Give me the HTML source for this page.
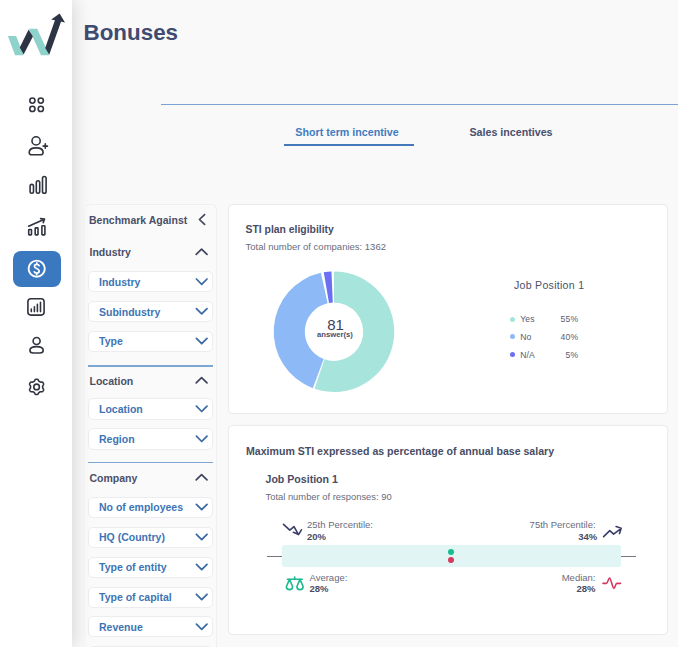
<!DOCTYPE html>
<html><head><meta charset="utf-8">
<style>
*{box-sizing:border-box;margin:0;padding:0}
html,body{width:678px;height:647px;overflow:hidden}
body{background:#f9f9fa;font-family:"Liberation Sans",sans-serif;position:relative}
.abs{position:absolute}
#side{position:absolute;left:0;top:0;width:72px;height:647px;background:#fff;box-shadow:4px 0 15px rgba(0,0,0,0.12);z-index:5}
.t{position:absolute;white-space:nowrap;line-height:1}
#panel{left:84px;top:204px;width:133px;height:460px;background:#fafafb;border:1px solid #efeff1;border-left-color:rgba(0,0,0,0.015);border-radius:6px}
.dd{position:absolute;left:87.6px;width:125.2px;height:21.2px;background:#fff;border:1px solid #ededf0;border-radius:5px}
.div{position:absolute;left:88px;width:125px;height:1.6px;background:#7ea6d2}
.card{position:absolute;left:227.6px;width:440.6px;background:#fff;border:1px solid #ebebee;border-radius:5px;box-shadow:0 0 2px rgba(0,0,0,0.03)}
</style></head><body>
<div id="side">
<svg width="72" height="647" viewBox="0 0 72 647" style="position:absolute;left:0;top:0">
 <g fill="#8ed3cb">
  <polygon points="7.9,36.1 16.2,36.1 23.4,55.2 15.1,55.2"/>
  <polygon points="29,28.7 37.2,28.7 49.2,55.2 41,55.2"/>
 </g>
 <g fill="#2d3545">
  <polygon points="19.8,47.6 28.6,29.6 32.9,36.6 23.6,54.6"/>
  <polygon points="45.2,48 55.2,19.6 61.2,21.2 49.2,54.8"/>
  <polygon points="51.2,19.6 59.6,13.6 65,22.6"/>
 </g>
 <g fill="none" stroke="#30343f" stroke-width="1.6" stroke-linecap="round" stroke-linejoin="round">
  <circle cx="32.4" cy="100.6" r="2.6"/><circle cx="40.8" cy="100.6" r="2.6"/>
  <circle cx="32.4" cy="108.9" r="2.6"/><circle cx="40.8" cy="108.9" r="2.6"/>
  <circle cx="36.1" cy="140.9" r="4.1"/>
  <path d="M29.2 152.5 C29.2 149.6 32 147.9 36.1 147.9 C40.2 147.9 43.1 149.6 43.1 152.5 C43.1 154.2 42.3 154.8 40.5 154.8 L31.8 154.8 C30 154.8 29.2 154.2 29.2 152.5 Z"/>
  <path d="M45.3 143.9 V148.3 M43.1 146.1 H47.5" stroke-width="1.6"/>
  <rect x="30.1" y="184.4" width="3.4" height="8.8" rx="1.7"/>
  <rect x="36.3" y="180.7" width="3.4" height="12.5" rx="1.7"/>
  <rect x="42.5" y="176.5" width="3.6" height="16.7" rx="1.8"/>
  <rect x="28.7" y="229.5" width="2.8" height="5.4" rx="0.6"/>
  <rect x="35.2" y="227.9" width="2.8" height="7" rx="0.6"/>
  <rect x="41.9" y="225.8" width="3" height="9.1" rx="0.6"/>
  <path d="M28.6 226.2 L44.4 219.2 M40.6 218.6 L44.6 219 L43.2 222.6"/>
  <rect x="27.9" y="298.8" width="16.2" height="16.3" rx="3"/>
  <path d="M31.3 311.6 V309 M34.4 311.6 V306.7 M37.4 311.6 V304.4 M40.5 311.6 V302.3" stroke-width="1.6"/>
  <circle cx="36.6" cy="341" r="3.5"/>
  <path d="M29.9 350.3 C29.9 347.9 33 346.6 36.6 346.6 C40.2 346.6 43.2 347.9 43.2 350.3 C43.2 352.4 41.5 353 40 353 L33.2 353 C31.6 353 29.9 352.4 29.9 350.3 Z"/>
  <circle cx="36.6" cy="386.9" r="2.8"/>
  <path d="M36.60 379.25 L36.80 379.26 L37.00 379.27 L37.20 379.30 L37.39 379.34 L37.59 379.41 L37.77 379.50 L37.95 379.63 L38.11 379.81 L38.25 380.03 L38.37 380.28 L38.49 380.54 L38.59 380.76 L38.71 380.95 L38.83 381.10 L38.95 381.22 L39.08 381.32 L39.22 381.42 L39.35 381.50 L39.49 381.58 L39.62 381.66 L39.76 381.74 L39.90 381.82 L40.04 381.89 L40.19 381.96 L40.34 382.02 L40.51 382.07 L40.70 382.10 L40.92 382.10 L41.17 382.09 L41.44 382.06 L41.72 382.04 L41.99 382.05 L42.22 382.10 L42.42 382.19 L42.59 382.30 L42.75 382.43 L42.88 382.58 L43.01 382.74 L43.12 382.90 L43.23 383.07 L43.32 383.25 L43.41 383.43 L43.48 383.62 L43.54 383.81 L43.58 384.01 L43.59 384.22 L43.57 384.43 L43.49 384.66 L43.37 384.89 L43.22 385.13 L43.05 385.35 L42.91 385.56 L42.81 385.75 L42.74 385.93 L42.69 386.10 L42.67 386.26 L42.66 386.42 L42.65 386.58 L42.65 386.74 L42.65 386.90 L42.65 387.06 L42.65 387.22 L42.66 387.38 L42.67 387.54 L42.69 387.70 L42.74 387.87 L42.81 388.05 L42.91 388.24 L43.05 388.45 L43.22 388.67 L43.37 388.91 L43.49 389.14 L43.57 389.37 L43.59 389.58 L43.58 389.79 L43.54 389.99 L43.48 390.18 L43.41 390.37 L43.32 390.55 L43.23 390.72 L43.12 390.90 L43.01 391.06 L42.88 391.22 L42.75 391.37 L42.59 391.50 L42.42 391.61 L42.22 391.70 L41.99 391.75 L41.72 391.76 L41.44 391.74 L41.17 391.71 L40.92 391.70 L40.70 391.70 L40.51 391.73 L40.34 391.78 L40.19 391.84 L40.04 391.91 L39.90 391.98 L39.76 392.06 L39.62 392.14 L39.49 392.22 L39.35 392.30 L39.22 392.38 L39.08 392.48 L38.95 392.58 L38.83 392.70 L38.71 392.85 L38.59 393.04 L38.49 393.26 L38.37 393.52 L38.25 393.77 L38.11 393.99 L37.95 394.17 L37.77 394.30 L37.59 394.39 L37.39 394.46 L37.20 394.50 L37.00 394.53 L36.80 394.54 L36.60 394.55 L36.40 394.54 L36.20 394.53 L36.00 394.50 L35.81 394.46 L35.61 394.39 L35.43 394.30 L35.25 394.17 L35.09 393.99 L34.95 393.77 L34.83 393.52 L34.71 393.26 L34.61 393.04 L34.49 392.85 L34.37 392.70 L34.25 392.58 L34.12 392.48 L33.98 392.38 L33.85 392.30 L33.71 392.22 L33.58 392.14 L33.44 392.06 L33.30 391.98 L33.16 391.91 L33.01 391.84 L32.86 391.78 L32.69 391.73 L32.50 391.70 L32.28 391.70 L32.03 391.71 L31.76 391.74 L31.48 391.76 L31.21 391.75 L30.98 391.70 L30.78 391.61 L30.61 391.50 L30.45 391.37 L30.32 391.22 L30.19 391.06 L30.08 390.90 L29.97 390.72 L29.88 390.55 L29.79 390.37 L29.72 390.18 L29.66 389.99 L29.62 389.79 L29.61 389.58 L29.63 389.37 L29.71 389.14 L29.83 388.91 L29.98 388.67 L30.15 388.45 L30.29 388.24 L30.39 388.05 L30.46 387.87 L30.51 387.70 L30.53 387.54 L30.54 387.38 L30.55 387.22 L30.55 387.06 L30.55 386.90 L30.55 386.74 L30.55 386.58 L30.54 386.42 L30.53 386.26 L30.51 386.10 L30.46 385.93 L30.39 385.75 L30.29 385.56 L30.15 385.35 L29.98 385.13 L29.83 384.89 L29.71 384.66 L29.63 384.43 L29.61 384.22 L29.62 384.01 L29.66 383.81 L29.72 383.62 L29.79 383.43 L29.88 383.25 L29.97 383.07 L30.08 382.90 L30.19 382.74 L30.32 382.58 L30.45 382.43 L30.61 382.30 L30.78 382.19 L30.98 382.10 L31.21 382.05 L31.48 382.04 L31.76 382.06 L32.03 382.09 L32.28 382.10 L32.50 382.10 L32.69 382.07 L32.86 382.02 L33.01 381.96 L33.16 381.89 L33.30 381.82 L33.44 381.74 L33.58 381.66 L33.71 381.58 L33.85 381.50 L33.98 381.42 L34.12 381.32 L34.25 381.22 L34.37 381.10 L34.49 380.95 L34.61 380.76 L34.71 380.54 L34.83 380.28 L34.95 380.03 L35.09 379.81 L35.25 379.63 L35.43 379.50 L35.61 379.41 L35.81 379.34 L36.00 379.30 L36.20 379.27 L36.40 379.26 Z"/>
 </g>
</svg>
<div style="position:absolute;left:13px;top:251px;width:47.5px;height:35.5px;border-radius:8px;background:#3a78bf"></div>
<svg width="72" height="40" viewBox="0 248 72 40" style="position:absolute;left:0;top:248px">
 <circle cx="36.7" cy="268.7" r="8.1" fill="none" stroke="#fff" stroke-width="1.9"/>
 <path d="M39.1 265.6 C38.7 264.8 37.9 264.4 36.8 264.4 C35.4 264.4 34.5 265.2 34.5 266.3 C34.5 268.9 39.2 268.1 39.2 271.1 C39.2 272.3 38.2 273.1 36.7 273.1 C35.5 273.1 34.6 272.6 34.3 271.8 M36.8 262.9 V264.4 M36.7 273.1 V274.5" fill="none" stroke="#fff" stroke-width="1.75" stroke-linecap="round" stroke-linejoin="round"/>
</svg>
</div>
<div class="abs" style="left:160.5px;top:104px;width:518px;height:1px;background:#7aa3d3"></div>
<div class="abs" style="left:284px;top:144.4px;width:130px;height:1.8px;background:#4379bb"></div>
<div class="abs" id="panel"></div>
<div class="dd" style="top:271.2px"></div>
<div class="dd" style="top:300.8px"></div>
<div class="dd" style="top:330.6px"></div>
<div class="div" style="top:365.0px"></div>
<div class="dd" style="top:398.4px"></div>
<div class="dd" style="top:428.4px"></div>
<div class="div" style="top:461.7px"></div>
<div class="dd" style="top:496.6px"></div>
<div class="dd" style="top:526.5px"></div>
<div class="dd" style="top:556.6px"></div>
<div class="dd" style="top:586.5px"></div>
<div class="dd" style="top:616.3px"></div>
<div class="dd" style="top:646.2px"></div>
<div class="card" style="top:204px;height:210px"></div>
<div class="card" style="top:425px;height:210px"></div>
<div class="abs" style="left:266.7px;top:555.7px;width:15.6px;height:1.3px;background:#74777f"></div>
<div class="abs" style="left:620.5px;top:555.7px;width:15.3px;height:1.3px;background:#74777f"></div>
<div class="abs" style="left:282.3px;top:545.3px;width:339px;height:22.1px;border-radius:2.5px;background:#e1f5f4"></div>
<div class="abs" style="left:448.3px;top:548.8px;width:6.2px;height:6.2px;border-radius:50%;background:#18be92"></div>
<div class="abs" style="left:448.3px;top:556.5px;width:6.2px;height:6.2px;border-radius:50%;background:#d8395f"></div>
<div class="abs" style="left:510.4px;top:316.6px;width:5px;height:5px;border-radius:50%;background:#a7e5dc"></div>
<div class="abs" style="left:510.4px;top:334.4px;width:5px;height:5px;border-radius:50%;background:#8eb9f7"></div>
<div class="abs" style="left:510.4px;top:352.2px;width:5px;height:5px;border-radius:50%;background:#6a70f1"></div>

<svg class="abs" style="left:0;top:0" width="678" height="647">
<g>
<path d="M334.00 271.40 A60.3 60.3 0 1 1 314.47 388.75 L324.54 359.33 A29.2 29.2 0 1 0 334.00 302.50 Z" fill="#a7e5dc"/>
<path d="M312.78 388.14 A60.3 60.3 0 0 1 320.85 272.85 L327.63 303.20 A29.2 29.2 0 0 0 323.73 359.03 Z" fill="#8eb9f7"/>
<path d="M323.74 272.28 A60.3 60.3 0 0 1 331.47 271.45 L332.78 302.53 A29.2 29.2 0 0 0 329.03 302.93 Z" fill="#6a70f1"/>
</g>
<g fill="none" stroke-width="1.6" stroke-linecap="round" stroke-linejoin="round">
<path d="M204.6 214.6 L199.4 219.5 L204.6 224.4" stroke="#40465e" stroke-width="1.7"/>
<path d="M196.2 254.4 L201.6 249.2 L207 254.4" stroke="#40465e" stroke-width="1.75"/>
<path d="M196.4 279.0 L201.7 284.3 L207 279.0" stroke="#3b6aa3" stroke-width="1.75"/>
<path d="M196.4 308.6 L201.7 313.9 L207 308.6" stroke="#3b6aa3" stroke-width="1.75"/>
<path d="M196.4 338.4 L201.7 343.7 L207 338.4" stroke="#3b6aa3" stroke-width="1.75"/>
<path d="M196.2 382.8 L201.6 377.6 L207 382.8" stroke="#40465e" stroke-width="1.75"/>
<path d="M196.4 406.2 L201.7 411.5 L207 406.2" stroke="#3b6aa3" stroke-width="1.75"/>
<path d="M196.4 436.2 L201.7 441.5 L207 436.2" stroke="#3b6aa3" stroke-width="1.75"/>
<path d="M196.2 479.8 L201.6 474.6 L207 479.8" stroke="#40465e" stroke-width="1.75"/>
<path d="M196.4 504.4 L201.7 509.7 L207 504.4" stroke="#3b6aa3" stroke-width="1.75"/>
<path d="M196.4 534.3 L201.7 539.6 L207 534.3" stroke="#3b6aa3" stroke-width="1.75"/>
<path d="M196.4 564.4 L201.7 569.7 L207 564.4" stroke="#3b6aa3" stroke-width="1.75"/>
<path d="M196.4 594.3 L201.7 599.6 L207 594.3" stroke="#3b6aa3" stroke-width="1.75"/>
<path d="M196.4 624.1 L201.7 629.4 L207 624.1" stroke="#3b6aa3" stroke-width="1.75"/>
<path d="M196.4 654.0 L201.7 659.3 L207 654.0" stroke="#3b6aa3" stroke-width="1.75"/>
<path d="M283.5 524.3 L289.8 530.1 L294 526.6 L298.5 534.6 M293.4 532.3 L298.5 534.6 L301.4 529.8" stroke="#3a3e66"/>
<path d="M603.6 536.6 L609.8 530.6 L613.6 534.1 L621.2 528.3 M616.1 526.6 L621.2 528.3 L619.5 533.4" stroke="#3a3e66"/>
<path d="M603 583.4 L606.4 583.4 C607.8 583.4 608.4 578 609.6 578 C611 578 612.4 588.3 613.9 588.3 C615 588.3 615.4 583.4 617 583.4 L620.5 583.4" stroke="#d6365f"/>
<g stroke="#1db88e" stroke-width="1.6">
<path d="M287.4 579.2 H302.2 M294.7 577 V579.2"/>
<path d="M289.5 579.4 L286.4 586.5 A3.1 3.1 0 0 0 292.6 586.5 Z"/>
<path d="M300 579.4 L296.9 586.5 A3.1 3.1 0 0 0 303.1 586.5 Z"/>
</g>
</g>
</svg>
<div class="t" style="left:83.5px;top:22px;font-size:22.4px;font-weight:700;color:#3f4c70;">Bonuses</div>
<div class="t" style="left:295.3px;top:127px;font-size:10.7px;font-weight:700;color:#3f7cc0;">Short term incentive</div>
<div class="t" style="left:469.4px;top:127px;font-size:10.7px;font-weight:700;color:#494f6e;">Sales incentives</div>
<div class="t" style="left:89px;top:215px;font-size:10.5px;font-weight:700;color:#4a4f67;">Benchmark Against</div>
<div class="t" style="left:89.5px;top:247px;font-size:10.5px;font-weight:700;color:#4a4f67;">Industry</div>
<div class="t" style="left:99px;top:277px;font-size:10.5px;font-weight:700;color:#3d74b4;">Industry</div>
<div class="t" style="left:99px;top:307px;font-size:10.5px;font-weight:700;color:#3d74b4;">Subindustry</div>
<div class="t" style="left:99px;top:336px;font-size:10.5px;font-weight:700;color:#3d74b4;">Type</div>
<div class="t" style="left:89.5px;top:376px;font-size:10.5px;font-weight:700;color:#4a4f67;">Location</div>
<div class="t" style="left:99px;top:404px;font-size:10.5px;font-weight:700;color:#3d74b4;">Location</div>
<div class="t" style="left:99px;top:434px;font-size:10.5px;font-weight:700;color:#3d74b4;">Region</div>
<div class="t" style="left:89.5px;top:473px;font-size:10.5px;font-weight:700;color:#4a4f67;">Company</div>
<div class="t" style="left:99px;top:502px;font-size:10.5px;font-weight:700;color:#3d74b4;">No of employees</div>
<div class="t" style="left:99px;top:532px;font-size:10.5px;font-weight:700;color:#3d74b4;">HQ (Country)</div>
<div class="t" style="left:99px;top:562px;font-size:10.5px;font-weight:700;color:#3d74b4;">Type of entity</div>
<div class="t" style="left:99px;top:592px;font-size:10.5px;font-weight:700;color:#3d74b4;">Type of capital</div>
<div class="t" style="left:99px;top:622px;font-size:10.5px;font-weight:700;color:#3d74b4;">Revenue</div>
<div class="t" style="left:245.5px;top:225px;font-size:10.4px;font-weight:700;color:#474d66;">STI plan eligibility</div>
<div class="t" style="left:245.5px;top:242px;font-size:9.5px;font-weight:400;color:#686c7e;">Total number of companies: 1362</div>
<div class="t" style="left:327.2px;top:317px;font-size:15px;font-weight:400;color:#3b4160;">81</div>
<div class="t" style="left:317px;top:331px;font-size:7.7px;font-weight:700;color:#4b5068;">answer(s)</div>
<div class="t" style="left:513.9px;top:280px;font-size:10.6px;font-weight:400;color:#4b5068;letter-spacing:0.28px">Job Position 1</div>
<div class="t" style="left:520.2px;top:315px;font-size:8.6px;font-weight:400;color:#575c70;letter-spacing:0.15px">Yes</div>
<div class="t" style="right:99.8px;top:315px;font-size:8.6px;font-weight:400;color:#575c70;letter-spacing:0.15px">55%</div>
<div class="t" style="left:520.2px;top:333px;font-size:8.6px;font-weight:400;color:#575c70;letter-spacing:0.15px">No</div>
<div class="t" style="right:99.8px;top:333px;font-size:8.6px;font-weight:400;color:#575c70;letter-spacing:0.15px">40%</div>
<div class="t" style="left:520.2px;top:351px;font-size:8.6px;font-weight:400;color:#575c70;letter-spacing:0.15px">N/A</div>
<div class="t" style="right:99.8px;top:351px;font-size:8.6px;font-weight:400;color:#575c70;letter-spacing:0.15px">5%</div>
<div class="t" style="left:246px;top:446px;font-size:10.58px;font-weight:700;color:#474d66;">Maximum STI expressed as percentage of annual base salary</div>
<div class="t" style="left:265.5px;top:474px;font-size:10.6px;font-weight:700;color:#474d66;">Job Position 1</div>
<div class="t" style="left:265.5px;top:492px;font-size:9.4px;font-weight:400;color:#686c7e;">Total number of responses: 90</div>
<div class="t" style="left:307px;top:520px;font-size:9.5px;font-weight:400;color:#686c7e;">25th Percentile:</div>
<div class="t" style="left:307px;top:532px;font-size:9.5px;font-weight:700;color:#474d66;">20%</div>
<div class="t" style="left:309.5px;top:573px;font-size:9.5px;font-weight:400;color:#686c7e;">Average:</div>
<div class="t" style="left:309.5px;top:584px;font-size:9.5px;font-weight:700;color:#474d66;">28%</div>
<div class="t" style="right:82.4px;top:520px;font-size:9.5px;font-weight:400;color:#686c7e;">75th Percentile:</div>
<div class="t" style="right:80.7px;top:532px;font-size:9.5px;font-weight:700;color:#474d66;">34%</div>
<div class="t" style="right:82.5px;top:573px;font-size:9.5px;font-weight:400;color:#686c7e;">Median:</div>
<div class="t" style="right:82.5px;top:584px;font-size:9.5px;font-weight:700;color:#474d66;">28%</div>
</body></html>
